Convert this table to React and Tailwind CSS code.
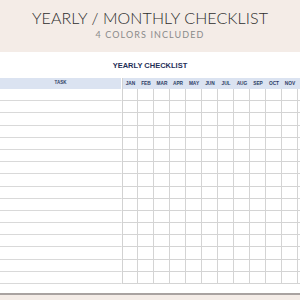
const months = ["JAN","FEB","MAR","APR","MAY","JUN","JUL","AUG","SEP","OCT","NOV",""];
const rows = Array.from({ length: 16 });

export default function App() {
  return (
    <div className="w-[300px] h-[300px] overflow-hidden bg-[#f4ece7] flex flex-col">
      <div className="h-[52px] shrink-0 flex flex-col items-center pt-[10px]">
        <div className="text-[16px] leading-[16px] font-light text-[#2e2e2e] tracking-[0.1px]" style={{ fontFamily: "Lato, 'Noto Sans', sans-serif" }}>
          YEARLY / MONTHLY CHECKLIST
        </div>
        <div className="mt-[4px] text-[9px] leading-[10px] text-[#8a8a8a] tracking-[1.1px]" style={{ fontFamily: "Lato, 'Noto Sans', sans-serif" }}>
          4 COLORS INCLUDED
        </div>
      </div>
      <div className="h-[241px] shrink-0 bg-white flex flex-col" style={{ fontFamily: "'Liberation Sans', Arial, sans-serif" }}>
        <div className="h-[26px] shrink-0 flex items-center justify-center pt-[2px] text-[7.5px] font-bold text-[#1f2f57]">
          YEARLY CHECKLIST
        </div>
        <div className="flex w-[320px]">
          <div className="w-[121px] shrink-0 flex flex-col">
            <div className="h-[11px] bg-[#dbe3f1] flex items-center justify-center text-[4.5px] font-bold text-[#2d3d66]">TASK</div>
            {rows.map((_, i) => (
              <div key={i} className="h-[12.2px] border-b border-[#d9d9d9]" />
            ))}
          </div>
          <div className="w-[1px] shrink-0 flex flex-col">
            <div className="h-[11px]" />
            {rows.map((_, i) => (
              <div key={i} className="h-[12.2px] border-b border-[#e6e6e6]" />
            ))}
          </div>
          {months.map((m, j) => (
            <div key={j} className={"w-[16px] shrink-0 flex flex-col" + (j === 0 ? " border-l border-[#d2d2d2]" : "")}>
              <div className="h-[11px] bg-[#dbe3f1] flex items-center justify-center text-[4.8px] font-bold text-[#2d3d66]">{m}</div>
              {rows.map((_, i) => (
                <div key={i} className="h-[12.2px] border-b border-r border-[#d4d4d4]" />
              ))}
            </div>
          ))}
        </div>
      </div>
      <div className="h-[2px] shrink-0 bg-[#a9a3a1]" />
    </div>
  );
}
